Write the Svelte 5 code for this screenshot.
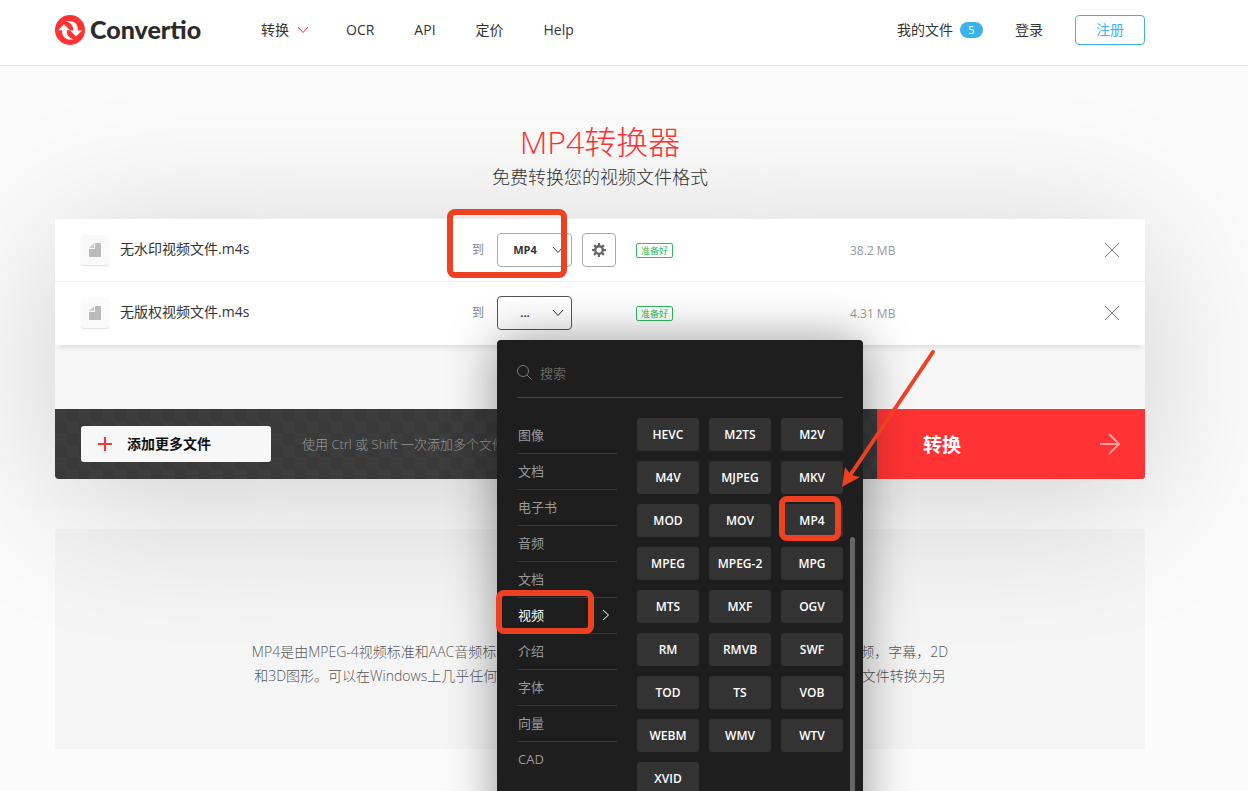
<script lang="ts">
	type FileItem = { name: string; format: string; size: string; ready: string };

	const links = ['OCR', 'API', '定价', 'Help'];

	const files: FileItem[] = $state([
		{ name: '无水印视频文件.m4s', format: 'MP4', size: '38.2 MB', ready: '准备好' },
		{ name: '无版权视频文件.m4s', format: '', size: '4.31 MB', ready: '准备好' }
	]);

	const categories = [
		'图像', '文档', '电子书', '音频', '文档', '视频', '介绍', '字体', '向量', 'CAD'
	];

	const formats = [
		'HEVC', 'M2TS', 'M2V', 'M4V', 'MJPEG', 'MKV', 'MOD', 'MOV', 'MP4', 'MPEG', 'MPEG-2', 'MPG',
		'MTS', 'MXF', 'OGV', 'RM', 'RMVB', 'SWF', 'TOD', 'TS', 'VOB', 'WEBM', 'WMV', 'WTV', 'XVID'
	];

	let openRow = $state(1);
	let activeCategory = $state(5);

	// Open the format menu of a row, or close it again
	function toggleMenu(index: number) {
		openRow = openRow === index ? -1 : index;
	}

	function pickFormat(index: number, format: string) {
		files[index].format = format;
		openRow = -1;
	}

	function removeFile(index: number) {
		files.splice(index, 1);
		openRow = -1;
	}
</script>

<svelte:head>
	<title>MP4转换器</title>
</svelte:head>

<div class="page">
	<header class="header">
		<a class="logo" href="/" aria-label="Convertio">
			<svg width="30" height="30" viewBox="0 0 30 30" aria-hidden="true">
				<circle cx="15" cy="15" r="15" fill="#ff3333" />
				<path
					d="M10 6.200h5.500c4 0 7.300 3.200 7.300 7.300v2h4.200l-6 6-6-6h3.200v-1.200c0-4.200-3.200-7.300-8.200-8.100z"
					fill="#fff"
				/>
				<path
					d="M20 24.500h-5.500c-4 0-7.300-3.200-7.300-7.300v-2H3l6-6 6 6h-3.200v1.200c0 4.200 3.200 7.300 8.200 8.100z"
					fill="#fff"
				/>
			</svg>
			<span>Convertio</span>
		</a>
		<nav class="nav">
			<a href="/convert" class="with-arrow">
				转换
				<svg width="12" height="8" viewBox="0 0 12 8" aria-hidden="true">
					<path d="M1 1l5 5.5L11 1" fill="none" stroke="#ff3333" />
				</svg>
			</a>
			{#each links as link}
				<a href="/{link}">{link}</a>
			{/each}
		</nav>
		<div class="account">
			<a href="/files" class="my-files">我的文件 <span class="count">5</span></a>
			<a href="/login">登录</a>
			<a href="/register" class="register">注册</a>
		</div>
	</header>

	<main>
		<h1>MP4转换器</h1>
		<p class="subtitle">免费转换您的视频文件格式</p>

		<section class="converter">
			<ul class="files">
				{#each files as file, i}
					<li class="file">
						<span class="file-icon">
							<svg width="12" height="14" viewBox="0 0 12 14" aria-hidden="true">
								<path d="M6 0h5.2c.5 0 .8.3.8.8V14H.8c-.5 0-.8-.3-.8-.8V6h6z" fill="#bbb" />
								<path d="M5 0v5H0z" fill="#ccc" />
							</svg>
						</span>
						<span class="file-name">{file.name}</span>
						<span class="to">到</span>
						<div class="picker">
							<button
								type="button"
								class="picker-button"
								class:open={openRow === i}
								aria-haspopup="true"
								aria-expanded={openRow === i}
								onclick={() => toggleMenu(i)}
							>
								<span>{file.format || '...'}</span>
								<svg width="12" height="8" viewBox="0 0 12 8" aria-hidden="true">
									<path d="M1 1l5 5.5L11 1" fill="none" stroke="#333" />
								</svg>
							</button>

							{#if openRow === i}
								<div class="menu">
									<label class="search">
										<svg width="15" height="15" viewBox="0 0 15 15" aria-hidden="true">
											<g fill="none" stroke="#777">
												<circle cx="6" cy="6" r="5.5" />
												<path d="M10 10l4.5 4.5" />
											</g>
										</svg>
										<input type="text" placeholder="搜索" aria-label="搜索" />
									</label>
									<div class="menu-body">
										<div class="categories">
											{#each categories as category, c}
												<button
													type="button"
													class="category"
													class:active={activeCategory === c}
													onclick={() => (activeCategory = c)}
												>
													{category}
													{#if activeCategory === c}
														<svg width="8" height="12" viewBox="0 0 8 12" aria-hidden="true">
															<path d="M1 1l5.5 5L1 11" fill="none" stroke="#fff" />
														</svg>
													{/if}
												</button>
											{/each}
										</div>
										<div class="formats">
											{#each formats as format}
												<button type="button" class="format" onclick={() => pickFormat(i, format)}
													>{format}</button
												>
											{/each}
										</div>
									</div>
									<div class="scroll-thumb"></div>
								</div>
							{/if}
						</div>
						<div class="options">
							{#if file.format}
								<button type="button" class="settings" aria-label="设置">
									<svg width="14" height="14" viewBox="0 0 14 14" aria-hidden="true">
										<circle cx="7" cy="7" r="3.8" fill="none" stroke="#666" stroke-width="2.4" />
										<path
											d="M7 0v3M7 11v3M0 7h3M11 7h3M2.1 2.1l2 2M9.9 9.9l2 2M11.9 2.1l-2 2M4.1 9.9l-2 2"
											stroke="#666"
											stroke-width="2.2"
										/>
									</svg>
								</button>
							{/if}
						</div>
						<div class="status"><span class="badge">{file.ready}</span></div>
						<span class="size">{file.size}</span>
						<button type="button" class="remove" aria-label="删除" onclick={() => removeFile(i)}>
							<svg width="14" height="14" viewBox="0 0 14 14" aria-hidden="true">
								<path d="M0 0l14 14M14 0L0 14" stroke="#777" />
							</svg>
						</button>
					</li>
				{/each}
			</ul>

			<div class="bar">
				<button type="button" class="add">
					<svg width="14" height="14" viewBox="0 0 14 14" aria-hidden="true">
						<path d="M7 0v14M0 7h14" stroke="#ff3333" stroke-width="2" />
					</svg>
					<span>添加更多文件</span>
				</button>
				<span class="hint">使用 Ctrl 或 Shift 一次添加多个文件</span>
				<button type="button" class="convert">
					转换
					<svg width="20" height="22" viewBox="0 0 20 22" aria-hidden="true">
						<path d="M0 11h19M9 1l10 10L9 21" fill="none" stroke="#ff9f9f" stroke-width="2" />
					</svg>
				</button>
			</div>
		</section>

		<section class="about">
			<p>
				MP4是由MPEG-4视频标准和AAC音频标准所组成的多媒体容器格式，它能够支持多种内容，例如视频，字幕，2D<br
				/>和3D图形。可以在Windows上几乎任何一种播放器中打开MP4文件，您也可以使用本转换器将MP4文件转换为另<br
				/>一种格式。
			</p>
		</section>
	</main>

	<!-- Step markers drawn over the page -->
	<div class="marks" aria-hidden="true">
		<div class="mark mark-target"></div>
		<div class="mark mark-category"></div>
		<div class="mark mark-format"></div>
		<svg class="arrow" width="96" height="140" viewBox="0 0 96 140">
			<path d="M91 3L9 125" stroke="#ee4023" stroke-width="4" stroke-linecap="round" />
			<path d="M0 138L3 118l6 8 9 2z" fill="#ee4023" />
		</svg>
	</div>
</div>

<style>
	:global(body) {
		margin: 0;
		background: #fbfbfb;
	}

	.page {
		position: relative;
		min-height: 100vh;
		overflow: hidden;
		box-sizing: border-box;
		font-family: 'Open Sans', 'Noto Sans CJK SC', sans-serif;
		font-size: 14px;
		color: #333;
	}

	a {
		color: inherit;
		text-decoration: none;
	}

	button {
		font-family: inherit;
		font-size: inherit;
		color: inherit;
		padding: 0;
		border: none;
		background: none;
		cursor: pointer;
	}

	svg {
		flex: none;
	}

	/* Header */
	.header {
		display: flex;
		align-items: center;
		height: 60px;
		padding: 0 103px 5px 55px;
		background: #fff;
		border-bottom: 1px solid #e6e6e6;
	}

	.logo {
		display: flex;
		align-items: center;
		gap: 5px;
		width: 206px;
		font-family: Lato, sans-serif;
		font-size: 25px;
		font-weight: 900;
		line-height: 28px;
		color: #2b2b2b;
	}

	.logo span {
		padding-bottom: 2px;
	}

	.nav {
		display: flex;
		align-items: center;
		gap: 40px;
		line-height: 20px;
	}

	.with-arrow {
		display: flex;
		align-items: center;
		gap: 8px;
		margin-right: -3px;
	}

	.account {
		display: flex;
		align-items: center;
		gap: 32px;
		margin-left: auto;
		line-height: 20px;
	}

	.my-files {
		display: flex;
		align-items: center;
		gap: 7px;
	}

	.count {
		width: 23px;
		border-radius: 8px;
		background: #3db2e8;
		color: #fff;
		font-size: 11px;
		line-height: 16px;
		text-align: center;
	}

	.register {
		width: 68px;
		border: 1px solid #3db2e8;
		border-radius: 4px;
		color: #3db2e8;
		line-height: 28px;
		text-align: center;
	}

	/* Converter */
	main {
		padding: 54px 103px 42px 55px;
	}

	h1 {
		margin: 0;
		color: #ff3333;
		font-size: 32px;
		font-weight: 300;
		line-height: 44px;
		text-align: center;
	}

	.subtitle {
		margin: 0 0 28px;
		font-size: 18px;
		font-weight: 300;
		line-height: 27px;
		text-align: center;
	}

	.converter {
		position: relative;
		background: #f7f7f7;
		border-radius: 4px;
		box-shadow: 0 20px 150px rgba(0, 0, 0, 0.18);
	}

	.files {
		margin: 0 0 64px;
		padding: 0;
		list-style: none;
		background: #fff;
		box-shadow: 0 6px 6px -4px rgba(0, 0, 0, 0.12);
	}

	.file {
		display: flex;
		align-items: center;
		height: 62px;
		padding: 0 26px;
	}

	.file + .file {
		padding-bottom: 1px;
		border-top: 1px solid #eee;
	}

	.file-icon {
		display: flex;
		align-items: center;
		justify-content: center;
		width: 28px;
		height: 30px;
		margin-right: 11px;
		border-radius: 3px;
		background: #fafafa;
		box-shadow: 0 1px 1px rgba(0, 0, 0, 0.12);
	}

	.file-name {
		flex: 1;
		padding-bottom: 4px;
	}

	.to {
		width: 25px;
		padding-bottom: 2px;
		color: #888;
		font-size: 12px;
	}

	.picker {
		position: relative;
		width: 75px;
		margin-right: 10px;
	}

	.picker-button {
		display: flex;
		align-items: center;
		width: 100%;
		height: 34px;
		padding-right: 7px;
		border: 1px solid #aaa;
		border-radius: 4px;
		font-size: 11px;
		font-weight: 700;
	}

	.picker-button.open {
		border-color: #555;
	}

	.picker-button span {
		flex: 1;
		padding-bottom: 2px;
		text-align: center;
	}

	.options {
		width: 54px;
	}

	.settings {
		display: flex;
		align-items: center;
		justify-content: center;
		width: 34px;
		height: 34px;
		border: 1px solid #aaa;
		border-radius: 4px;
	}

	.status {
		display: flex;
		width: 214px;
	}

	.badge {
		width: 35px;
		border: 1px solid #2dbe60;
		border-radius: 2px;
		color: #2dbe60;
		font-size: 9px;
		line-height: 13px;
		text-align: center;
	}

	.size {
		width: 255px;
		color: #999;
		font-size: 12px;
	}

	.remove {
		display: flex;
	}

	.bar {
		display: flex;
		align-items: center;
		height: 70px;
		padding-left: 26px;
		border-radius: 0 0 4px 4px;
		overflow: hidden;
		background: repeating-conic-gradient(#393939 0 25%, #3d3d3d 0 50%) 0 0 / 24px 24px;
	}

	.add {
		display: flex;
		align-items: center;
		gap: 15px;
		width: 190px;
		height: 36px;
		padding-left: 17px;
		border-radius: 3px;
		background: #f7f7f7;
		color: #111;
		font-weight: 700;
	}

	.add span {
		padding-bottom: 2px;
	}

	.hint {
		flex: 1;
		padding: 0 0 2px 31px;
		color: #999;
		font-size: 13px;
		font-weight: 300;
	}

	.convert {
		display: flex;
		align-items: center;
		justify-content: space-between;
		width: 268px;
		height: 100%;
		padding: 0 25px 0 46px;
		background: #ff3333;
		color: #fff;
		font-size: 19px;
		font-weight: 700;
	}

	/* Format menu */
	.menu {
		position: absolute;
		z-index: 2;
		top: 44px;
		left: 0;
		width: 326px;
		padding: 0 20px 40px;
		border-radius: 4px;
		background: #1e1e1e;
		box-shadow: 0 0 50px rgba(0, 0, 0, 0.4);
	}

	.search {
		display: flex;
		align-items: center;
		gap: 8px;
		height: 58px;
		padding-top: 8px;
		box-sizing: border-box;
		border-bottom: 1px solid #444;
		margin-bottom: 20px;
	}

	.search input {
		flex: 1;
		min-width: 0;
		padding: 0;
		border: none;
		outline: none;
		background: none;
		color: #fff;
		font-family: inherit;
		font-size: 13px;
	}

	.search input::placeholder {
		color: #666;
	}

	.menu-body {
		display: flex;
		align-items: flex-start;
		gap: 20px;
	}

	.categories {
		width: 100px;
	}

	.category {
		display: flex;
		align-items: center;
		justify-content: space-between;
		width: 100%;
		height: 36px;
		padding: 0 7px 2px 1px;
		border-bottom: 1px solid #3a3a3a;
		color: #999;
		font-size: 13px;
	}

	.category:last-child {
		border-bottom-color: transparent;
	}

	.category.active {
		color: #fff;
	}

	.formats {
		display: grid;
		grid-template-columns: repeat(3, 62px);
		gap: 10px;
	}

	.format {
		height: 33px;
		border-radius: 3px;
		background: #333;
		color: #fff;
		font-size: 12px;
		font-weight: 600;
	}

	.scroll-thumb {
		position: absolute;
		top: 197px;
		right: 8px;
		bottom: 0;
		width: 5px;
		border-radius: 3px;
		background: #666;
	}

	/* Description */
	.about {
		margin-top: 50px;
		padding: 111px 0 37px;
		background: rgba(0, 0, 0, 0.024);
	}

	.about p {
		margin: 0;
		color: #555;
		font-weight: 300;
		line-height: 24px;
		text-align: center;
		white-space: nowrap;
	}

	/* Markers */
	.marks {
		position: absolute;
		z-index: 3;
		top: 0;
		left: 0;
		pointer-events: none;
	}

	.mark {
		position: absolute;
		box-sizing: border-box;
		border: 6px solid #ee4023;
		border-radius: 8px;
	}

	.mark-target {
		top: 209px;
		left: 447px;
		width: 120px;
		height: 69px;
	}

	.mark-category {
		top: 590px;
		left: 496px;
		width: 98px;
		height: 44px;
	}

	.mark-format {
		top: 496px;
		left: 779px;
		width: 62px;
		height: 45px;
	}

	.arrow {
		position: absolute;
		top: 349px;
		left: 842px;
	}
</style>
